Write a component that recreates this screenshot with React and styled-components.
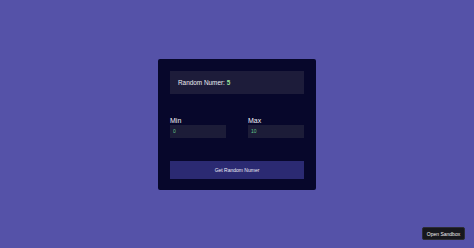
import React, { useState } from "react";
import styled, { createGlobalStyle } from "styled-components";

const GlobalStyle = createGlobalStyle`
  html, body {
    margin: 0;
    padding: 0;
    height: 100%;
  }
  body {
    background: #5552a8;
    font-family: "Liberation Sans", Arial, sans-serif;
  }
  #root {
    height: 100%;
  }
`;

const Page = styled.div`
  height: 100vh;
  display: flex;
  align-items: center;
  justify-content: center;
`;

const Card = styled.div`
  width: 134px;
  padding: 12px 12px 11px;
  background: #07072b;
  border-radius: 2px;
  display: flex;
  flex-direction: column;
`;

const Display = styled.div`
  height: 23px;
  background: #1d1c3a;
  display: flex;
  align-items: center;
  padding-left: 8px;
  color: #ececf2;
  font-size: 6.4px;
`;

const Result = styled.span`
  color: #9be29b;
  font-weight: 700;
`;

const Fields = styled.div`
  display: grid;
  grid-template-columns: 56px 56px;
  column-gap: 22px;
  margin-top: 22px;
`;

const Field = styled.label`
  display: flex;
  flex-direction: column;
`;

const Label = styled.span`
  color: #f2f2f7;
  font-size: 7px;
  line-height: 9px;
`;

const Input = styled.input`
  box-sizing: border-box;
  width: 100%;
  height: 13px;
  border: none;
  outline: none;
  background: #1c1c38;
  color: #62c48a;
  font-family: inherit;
  font-size: 5px;
  padding: 0 3px;
`;

const Button = styled.button`
  margin-top: 23px;
  height: 18px;
  border: none;
  background: #2b2a72;
  color: #ececf4;
  font-family: inherit;
  font-size: 5px;
  cursor: pointer;
`;

const SandboxLink = styled.a`
  position: fixed;
  right: 9px;
  bottom: 8px;
  box-sizing: border-box;
  width: 43px;
  height: 13px;
  display: flex;
  align-items: center;
  justify-content: center;
  background: #17171c;
  border: 1px solid #2c2c34;
  border-radius: 2px;
  color: #f2f2f2;
  font-size: 5px;
  text-decoration: none;
`;

export default function App() {
  const [min, setMin] = useState(0);
  const [max, setMax] = useState(10);
  const [num, setNum] = useState(5);

  const roll = () => {
    const lo = Number(min);
    const hi = Number(max);
    setNum(Math.floor(Math.random() * (hi - lo + 1)) + lo);
  };

  return (
    <>
      <GlobalStyle />
      <Page>
        <Card>
          <Display>
            Random Numer:&nbsp;<Result>{num}</Result>
          </Display>
          <Fields>
            <Field>
              <Label>Min</Label>
              <Input value={min} onChange={e => setMin(e.target.value)} />
            </Field>
            <Field>
              <Label>Max</Label>
              <Input value={max} onChange={e => setMax(e.target.value)} />
            </Field>
          </Fields>
          <Button onClick={roll}>Get Random Numer</Button>
        </Card>
      </Page>
      <SandboxLink href="#">Open Sandbox</SandboxLink>
    </>
  );
}
